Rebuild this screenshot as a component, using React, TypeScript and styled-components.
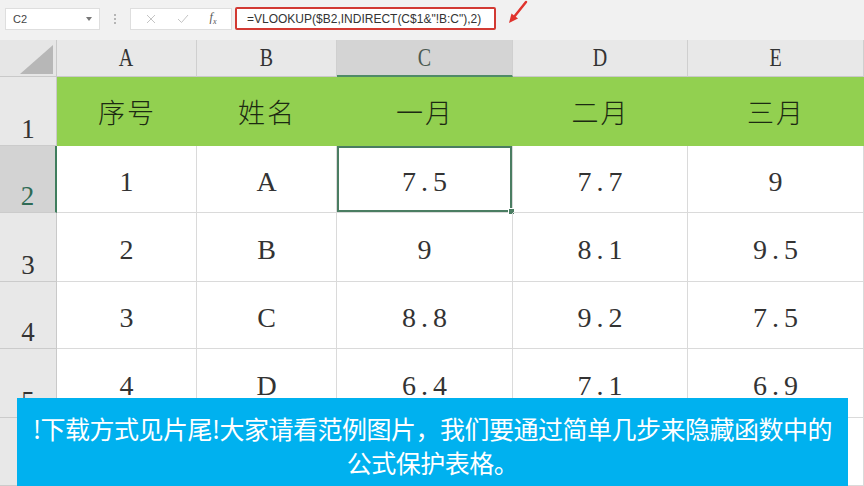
import React from "react";
import styled, { createGlobalStyle } from "styled-components";

const GlobalStyle = createGlobalStyle`
  html, body {
    margin: 0;
    padding: 0;
    width: 864px;
    height: 486px;
    overflow: hidden;
    background: #ffffff;
  }
`;

const columns = ["A", "B", "C", "D", "E"];
const colWidths = [140, 140, 176, 175, 176];
const rowHeights = [69, 67, 69, 67, 69, 68];

const titles = ["序号", "姓名", "一月", "二月", "三月"];
const rows = [
  ["1", "A", "7.5", "7.7", "9"],
  ["2", "B", "9", "8.1", "9.5"],
  ["3", "C", "8.8", "9.2", "7.5"],
  ["4", "D", "6.4", "7.1", "6.9"],
  ["", "", "", "", ""],
];

const SERIF = `"Liberation Serif", "Noto Sans CJK SC", serif`;

const Screen = styled.div`
  position: relative;
  width: 864px;
  height: 486px;
  overflow: hidden;
  background: #ffffff;
`;

const Toolbar = styled.div`
  height: 40px;
  box-sizing: border-box;
  display: flex;
  align-items: center;
  padding: 0 0 3px 5px;
  background: #f1f1f1;
  font-family: "Liberation Sans", Arial, sans-serif;
`;

const NameBox = styled.div`
  width: 95px;
  height: 22px;
  box-sizing: border-box;
  display: flex;
  align-items: center;
  justify-content: space-between;
  padding: 0 7px 0 7px;
  background: #ffffff;
  border: 1px solid #dedede;
  font-size: 11px;
  color: #444;
`;

const DropArrow = styled.span`
  width: 0;
  height: 0;
  border-left: 3px solid transparent;
  border-right: 3px solid transparent;
  border-top: 4px solid #777;
`;

const Grip = styled.div`
  width: 30px;
  display: flex;
  flex-direction: column;
  align-items: center;
  gap: 2px;

  span {
    width: 2px;
    height: 2px;
    background: #b5b5b5;
  }
`;

const FuncBox = styled.div`
  width: 102px;
  height: 22px;
  box-sizing: border-box;
  display: flex;
  align-items: center;
  justify-content: space-around;
  padding: 0 4px;
  background: #ffffff;
  border: 1px solid #dedede;
`;

const Fx = styled.span`
  font-family: "Liberation Serif", serif;
  font-style: italic;
  font-size: 12px;
  color: #555;

  sub {
    font-size: 8px;
  }
`;

const FormulaBox = styled.div`
  width: 261px;
  height: 23px;
  margin-left: 3px;
  box-sizing: border-box;
  display: flex;
  align-items: center;
  padding-left: 10px;
  background: #ffffff;
  border: 2px solid #d23a33;
  border-radius: 2px;
  font-size: 12px;
  color: #333;
  white-space: nowrap;
`;

const Sheet = styled.div`
  display: grid;
  grid-template-columns: 57px ${colWidths.map((w) => `${w}px`).join(" ")};
  grid-template-rows: 37px ${rowHeights.map((h) => `${h}px`).join(" ")};
`;

const Corner = styled.div`
  display: flex;
  align-items: flex-end;
  justify-content: flex-end;
  padding: 0 3px 2px 0;
  background: #e6e6e6;
  border-right: 1px solid #c9c9c9;
  border-bottom: 1px solid #c9c9c9;
`;

const ColHead = styled.div<{ $active?: boolean }>`
  display: flex;
  align-items: center;
  justify-content: center;
  box-sizing: border-box;
  background: ${(p) => (p.$active ? "#d4d4d4" : "#e8e8e8")};
  border-right: 1px solid #cfcfcf;
  border-bottom: ${(p) => (p.$active ? "2px solid #4f8a67" : "1px solid #c9c9c9")};
  font-family: ${SERIF};
  font-size: 25px;
  color: ${(p) => (p.$active ? "#4b5a52" : "#333")};

  span {
    display: inline-block;
    transform: scaleX(0.8);
  }
`;

const RowHead = styled.div<{ $active?: boolean }>`
  display: flex;
  align-items: flex-end;
  justify-content: center;
  box-sizing: border-box;
  padding-bottom: 2px;
  background: ${(p) => (p.$active ? "#d3d3d3" : "#e8e8e8")};
  border-right: ${(p) => (p.$active ? "2px solid #3f7d5d" : "1px solid #c9c9c9")};
  border-bottom: 1px solid #cbcbcb;
  font-family: ${SERIF};
  font-size: 27px;
  line-height: 1;
  color: ${(p) => (p.$active ? "#2f6b55" : "#333")};
`;

const TitleCell = styled.div`
  display: flex;
  align-items: center;
  justify-content: center;
  background: #92d050;
  font-family: "Noto Sans CJK SC", sans-serif;
  font-weight: 300;
  font-size: 27px;
  color: #1c2a12;
  letter-spacing: 2px;
`;

const Cell = styled.div<{ $selected?: boolean }>`
  position: relative;
  display: flex;
  align-items: center;
  justify-content: center;
  box-sizing: border-box;
  padding-top: 6px;
  border-right: 1px solid #dadada;
  border-bottom: 1px solid #dadada;
  box-shadow: ${(p) => (p.$selected ? "inset 0 0 0 2px #4a7d62" : "none")};
  font-family: ${SERIF};
  font-size: 28px;
  color: #333;
  letter-spacing: 5px;
  text-indent: 5px;
`;

const Handle = styled.span`
  position: absolute;
  right: -3px;
  bottom: -3px;
  width: 5px;
  height: 5px;
  background: #4a7d62;
  border: 1px solid #fff;
`;

const Caption = styled.div`
  position: absolute;
  left: 17px;
  top: 398px;
  width: 831px;
  height: 88px;
  box-sizing: border-box;
  padding-top: 13px;
  background: #00b1ef;
  color: #ffffff;
  font-family: "Noto Sans CJK SC", sans-serif;
  font-size: 25px;
  line-height: 34px;
  text-align: center;
  letter-spacing: -0.5px;
`;

const App = () => {
  return (
    <Screen>
      <GlobalStyle />
      <Toolbar>
        <NameBox>
          C2
          <DropArrow />
        </NameBox>
        <Grip>
          <span />
          <span />
          <span />
        </Grip>
        <FuncBox>
          <svg width="10" height="10" viewBox="0 0 10 10">
            <path d="M1 1L9 9M9 1L1 9" stroke="#c4c4c4" strokeWidth="1" fill="none" />
          </svg>
          <svg width="12" height="10" viewBox="0 0 12 10">
            <path d="M1 5L4.5 8.5L11 1" stroke="#c4c4c4" strokeWidth="1" fill="none" />
          </svg>
          <Fx>
            f<sub>x</sub>
          </Fx>
        </FuncBox>
        <FormulaBox>=VLOOKUP($B2,INDIRECT(C$1&"!B:C"),2)</FormulaBox>
        <svg width="24" height="26" viewBox="0 0 24 26" style={{ marginLeft: 10, marginTop: -12 }}>
          <path d="M20 2L8 17" stroke="#e0332d" strokeWidth="2.5" fill="none" strokeLinecap="round" />
          <path d="M3 23L5.5 13.5L12 18.5Z" fill="#e0332d" />
        </svg>
      </Toolbar>

      <Sheet>
        <Corner>
          <svg width="33" height="29" viewBox="0 0 33 29">
            <path d="M33 0L33 29L0 29Z" fill="#b7b7b7" />
          </svg>
        </Corner>
        {columns.map((c) => (
          <ColHead key={c} $active={c === "C"}>
            <span>{c}</span>
          </ColHead>
        ))}

        <RowHead>1</RowHead>
        {titles.map((t) => (
          <TitleCell key={t}>{t}</TitleCell>
        ))}

        {rows.map((row, r) => (
          <React.Fragment key={r}>
            <RowHead $active={r === 0}>{r + 2}</RowHead>
            {row.map((v, c) => {
              const selected = r === 0 && c === 2;
              return (
                <Cell key={c} $selected={selected}>
                  {v}
                  {selected && <Handle />}
                </Cell>
              );
            })}
          </React.Fragment>
        ))}
      </Sheet>

      <Caption>
        !下载方式见片尾!大家请看范例图片，我们要通过简单几步来隐藏函数中的
        <br />
        公式保护表格。
      </Caption>
    </Screen>
  );
};

export default App;
